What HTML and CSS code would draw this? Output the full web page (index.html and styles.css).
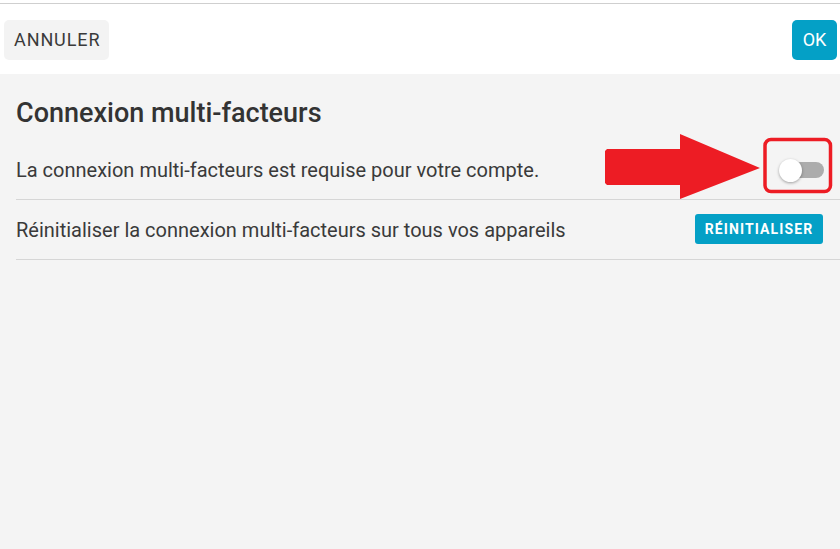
FILE: index.html
```html
<!DOCTYPE html>
<html lang="fr">
<head>
<meta charset="utf-8">
<title>Connexion multi-facteurs</title>
<link rel="stylesheet" href="styles.css">
</head>
<body>
<div class="page">
  <header class="bar">
    <button class="btn btn-cancel">ANNULER</button>
    <button class="btn btn-ok">OK</button>
  </header>
  <main class="content">
    <h1 class="title">Connexion multi-facteurs</h1>
    <div class="row">
      <span class="label">La connexion multi-facteurs est requise pour votre compte.</span>
      <span class="toggle"><span class="track"></span><span class="knob"></span></span>
    </div>
    <div class="row">
      <span class="label">Réinitialiser la connexion multi-facteurs sur tous vos appareils</span>
      <button class="btn-reset">RÉINITIALISER</button>
    </div>
  </main>
  <svg class="annotation" width="840" height="549" viewBox="0 0 840 549" aria-hidden="true">
    <polygon points="605,151 607,149 680,149 680,134 760,168 680,199 680,185 607,185 605,183" fill="#ed1c24"/>
    <rect x="765" y="139.5" width="65.5" height="52" rx="6" ry="6" fill="none" stroke="#ed1c24" stroke-width="3.5"/>
  </svg>
</div>
</body>
</html>
```
FILE: styles.css
```css
* { box-sizing: border-box; }
html, body { margin: 0; padding: 0; }
body {
  font-family: Roboto, "Noto Sans", "Liberation Sans", sans-serif;
  color: #333;
  background: #f4f4f4;
  width: 840px;
  height: 549px;
  overflow: hidden;
}
.page {
  position: relative;
  height: 549px;
  display: flex;
  flex-direction: column;
  padding-top: 3px;
  background: #fff;
}
.bar {
  border-top: 1px solid #cfcfcf;
  height: 71px;
  display: flex;
  align-items: center;
  justify-content: space-between;
  padding: 0 3px 0 4px;
  background: #fff;
}
.btn {
  font-family: Roboto, "Noto Sans", sans-serif;
  border: none;
  border-radius: 5px;
  height: 40px;
  font-size: 18px;
  cursor: pointer;
}
.btn-cancel {
  background: #f3f3f3;
  color: #3a3a3a;
  letter-spacing: 0.9px;
  padding: 0 9px 0 10px;
  width: 105px;
  margin-top: 1px;
}
.btn-ok {
  background: #04a0c6;
  color: #fff;
  width: 45px;
  padding: 0;
  margin-top: 1px;
}
.content {
  flex: 1;
  background: #f4f4f4;
  padding: 23px 0 0 16px;
}
.title {
  margin: 0 0 11px;
  font-size: 27px;
  line-height: 32px;
  font-weight: 500;
  color: #333;
}
.row {
  height: 60px;
  border-bottom: 1px solid #d6d6d6;
  display: flex;
  align-items: center;
  justify-content: space-between;
  padding-right: 17px;
}
.label {
  font-size: 20px;
  color: #3a3a3a;
}
.toggle {
  position: relative;
  width: 46px;
  height: 24px;
  margin-right: -2px;
}
.track {
  position: absolute;
  left: 3px;
  top: 4px;
  width: 42px;
  height: 16px;
  border-radius: 8px;
  background: #acacac;
}
.knob {
  position: absolute;
  left: 0;
  top: 1px;
  width: 23px;
  height: 23px;
  border-radius: 50%;
  background: #fff;
  box-shadow: 0 1px 3px rgba(0,0,0,0.35);
}
.btn-reset {
  font-family: Roboto, "Noto Sans", sans-serif;
  background: #04a0c6;
  color: #fff;
  border: none;
  border-radius: 3px;
  height: 30px;
  width: 128px;
  font-size: 14px;
  font-weight: 700;
  letter-spacing: 1.1px;
  padding: 0;
  margin-bottom: 1px;
}
.annotation {
  position: absolute;
  left: 0;
  top: 0;
  pointer-events: none;
}
```
